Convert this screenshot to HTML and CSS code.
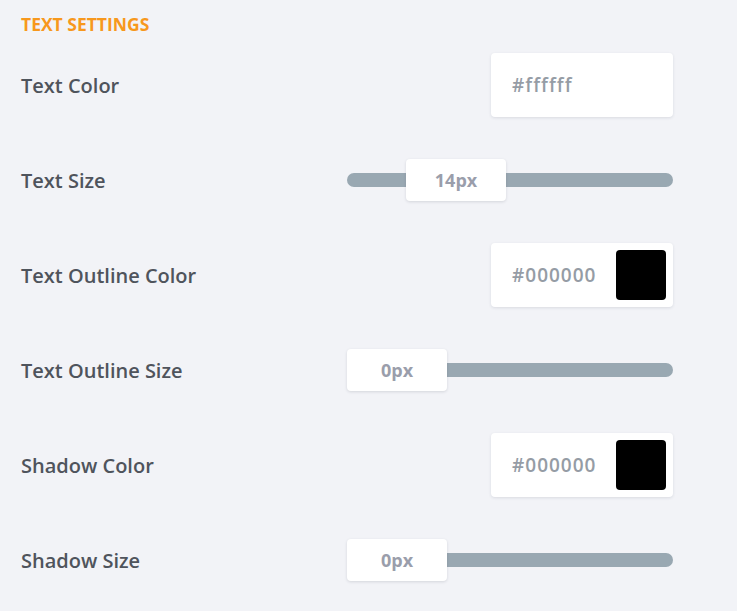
FILE: index.html
```html
<!DOCTYPE html>
<html>
<head>
<meta charset="utf-8">
<link rel="stylesheet" href="styles.css">
</head>
<body>
<div class="panel">
  <div class="title">Text Settings</div>
  <div class="rows">
    <div class="row">
      <span class="label">Text Color</span>
      <div class="color-input"><span class="value">#ffffff</span></div>
    </div>
    <div class="row">
      <span class="label">Text Size</span>
      <div class="slider"><div class="track"></div><div class="thumb" style="left:59px">14px</div></div>
    </div>
    <div class="row">
      <span class="label">Text Outline Color</span>
      <div class="color-input"><span class="value">#000000</span><span class="swatch"></span></div>
    </div>
    <div class="row">
      <span class="label">Text Outline Size</span>
      <div class="slider"><div class="track"></div><div class="thumb" style="left:0px">0px</div></div>
    </div>
    <div class="row">
      <span class="label">Shadow Color</span>
      <div class="color-input"><span class="value">#000000</span><span class="swatch"></span></div>
    </div>
    <div class="row">
      <span class="label">Shadow Size</span>
      <div class="slider"><div class="track"></div><div class="thumb" style="left:0px">0px</div></div>
    </div>
  </div>
</div>
</body>
</html>
```
FILE: styles.css
```css
html, body {
  margin: 0;
  background: #f2f3f7;
}
body {
  font-family: "Open Sans", "Liberation Sans", sans-serif;
}
.panel {
  padding: 13px 64px 0 21px;
}
.title {
  font-size: 17.5px;
  line-height: 22px;
  font-weight: 700;
  text-transform: uppercase;
  color: #f7981d;
  margin-bottom: 18px;
}
.rows {
  display: flex;
  flex-direction: column;
  gap: 31px;
}
.row {
  height: 64px;
  display: flex;
  align-items: center;
  justify-content: space-between;
}
.label {
  font-size: 20px;
  font-weight: 600;
  color: #4f545c;
}
.color-input {
  width: 182px;
  height: 64px;
  box-sizing: border-box;
  background: #fff;
  border-radius: 4px;
  box-shadow: 0 1px 3px rgba(40, 50, 70, 0.12);
  display: flex;
  align-items: center;
  justify-content: space-between;
  padding: 0 7px 0 21px;
}
.value {
  font-size: 19px;
  font-weight: 600;
  letter-spacing: 1px;
  color: #959ca5;
}
.swatch {
  width: 50px;
  height: 50px;
  border-radius: 4px;
  background: #000;
}
.slider {
  position: relative;
  width: 326px;
  height: 42px;
  display: flex;
  align-items: center;
}
.track {
  width: 100%;
  height: 14px;
  border-radius: 7px;
  background: #99a8b2;
}
.thumb {
  position: absolute;
  top: 0;
  width: 100px;
  height: 42px;
  background: #fff;
  border-radius: 4px;
  box-shadow: 0 1px 3px rgba(40, 50, 70, 0.15);
  display: flex;
  align-items: center;
  justify-content: center;
  font-size: 18px;
  font-weight: 700;
  color: #9a9eab;
}
```
